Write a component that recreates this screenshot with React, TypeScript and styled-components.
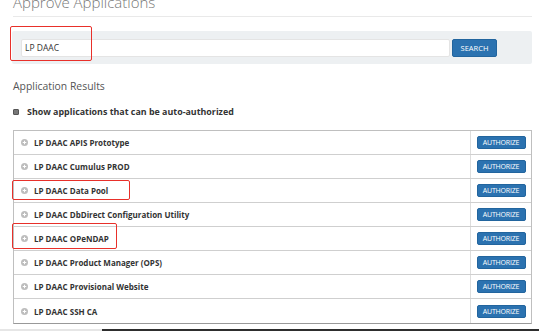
import styled, { createGlobalStyle } from 'styled-components';

const GlobalStyle = createGlobalStyle`
  html, body {
    margin: 0;
    padding: 0;
    background: #ffffff;
    overflow: hidden;
  }
  body {
    font-family: "Open Sans", "Liberation Sans", sans-serif;
    color: #333333;
  }
`

const Screen = styled.div`
  position: relative;
  width: 539px;
  height: 331px;
  display: flex;
  flex-direction: column;
  overflow: hidden;
`

const PageWrapper = styled.div`
  display: flex;
  flex-direction: column;
  padding: 0 7px 0 12px;
  flex-grow: 1;
`

const Title = styled.h1`
  margin: -8px 0 0 1px;
  padding-bottom: 4px;
  font-size: 15px;
  font-weight: 300;
  line-height: 20px;
  color: #777777;
  border-bottom: 1px solid #e9e9e9;
`

const SearchWell = styled.div`
  display: flex;
  align-items: center;
  gap: 2px;
  margin-top: 14px;
  height: 33px;
  padding: 0 9px;
  box-sizing: border-box;
  background: #edf0f2;
  border-radius: 2px;
`

const SearchInput = styled.input`
  width: 429px;
  height: 18px;
  box-sizing: border-box;
  padding: 0 3px;
  border: 1px solid #e4e4e4;
  border-radius: 2px;
  background: #ffffff;
  font-family: "Open Sans", sans-serif;
  font-size: 8.5px;
  color: #333333;
  outline: none;
`

const BlueButton = styled.button<{ $small?: boolean }>`
  display: flex;
  align-items: center;
  justify-content: center;
  width: ${p => (p.$small ? '49px' : '45px')};
  height: ${p => (p.$small ? '13px' : '18px')};
  padding: 0;
  border: 1px solid #22659e;
  border-radius: 2px;
  background: #2b72b0;
  color: #ffffff;
  font-family: "Open Sans", sans-serif;
  font-size: ${p => (p.$small ? '7px' : '7.5px')};
  letter-spacing: ${p => (p.$small ? '-0.2px' : '0')};
  text-transform: uppercase;
  cursor: pointer;
`

const SectionTitle = styled.h2`
  margin: 15px 0 0 1px;
  font-size: 10.4px;
  font-weight: 400;
  line-height: 14px;
  color: #555555;
`

const CheckRow = styled.label`
  display: flex;
  align-items: center;
  gap: 8px;
  margin: 13px 0 0 1px;
  font-size: 8.9px;
  font-weight: 700;
  line-height: 12px;
  color: #333333;
`

const CheckBox = styled.span`
  width: 4px;
  height: 4px;
  border: 0.5px solid #555555;
  background: #777777;
  border-radius: 1px;
`

const Table = styled.div`
  display: flex;
  flex-direction: column;
  margin: 12px 0 0 1px;
  border: 1px solid #bfbfbf;
  border-bottom-color: #999999;
`

const Row = styled.div`
  display: grid;
  grid-template-columns: 1fr 61px;
  height: 24px;
  box-sizing: border-box;
  border-bottom: 1px solid #cfcfcf;
  &:last-child {
    border-bottom: none;
  }
`

const NameCell = styled.div`
  display: flex;
  align-items: center;
  gap: 6px;
  padding-left: 7px;
  font-size: 8px;
  font-weight: 700;
  color: #333333;
`

const ActionCell = styled.div`
  display: flex;
  align-items: center;
  justify-content: center;
  border-left: 1px solid #dddddd;
`

const Highlight = styled.div<{ $x: number; $y: number; $w: number; $h: number }>`
  position: absolute;
  left: ${p => p.$x}px;
  top: ${p => p.$y}px;
  width: ${p => p.$w}px;
  height: ${p => p.$h}px;
  box-sizing: border-box;
  border: 1.5px solid #e8302a;
  border-radius: 2px;
  pointer-events: none;
`

const BottomBar = styled.div`
  display: flex;
  height: 2px;
`

const BarPart = styled.div<{ $dark?: boolean }>`
  width: ${p => (p.$dark ? 'auto' : '102px')};
  flex-grow: ${p => (p.$dark ? 1 : 0)};
  background: ${p => (p.$dark ? '#2e2e2e' : '#e6e6e6')};
`

const PlusIcon = () => (
  <svg width="7" height="7" viewBox="0 0 14 14">
    <circle cx="7" cy="7" r="7" fill="#bdbdbd" />
    <path d="M7 3.5v7M3.5 7h7" stroke="#ffffff" strokeWidth="2" />
  </svg>
)

const apps = [
  'LP DAAC APIS Prototype',
  'LP DAAC Cumulus PROD',
  'LP DAAC Data Pool',
  'LP DAAC DbDirect Configuration Utility',
  'LP DAAC OPeNDAP',
  'LP DAAC Product Manager (OPS)',
  'LP DAAC Provisional Website',
  'LP DAAC SSH CA',
]

const App: React.FC = () => {
  return (
    <Screen>
      <GlobalStyle />
      <PageWrapper>
        <Title>Approve Applications</Title>
        <SearchWell>
          <SearchInput defaultValue="LP DAAC" />
          <BlueButton>Search</BlueButton>
        </SearchWell>
        <SectionTitle>Application Results</SectionTitle>
        <CheckRow>
          <CheckBox />
          Show applications that can be auto-authorized
        </CheckRow>
        <Table>
          {apps.map(name => (
            <Row key={name}>
              <NameCell>
                <PlusIcon />
                {name}
              </NameCell>
              <ActionCell>
                <BlueButton $small>Authorize</BlueButton>
              </ActionCell>
            </Row>
          ))}
        </Table>
      </PageWrapper>
      <BottomBar>
        <BarPart />
        <BarPart $dark />
      </BottomBar>
      <Highlight $x={10} $y={26} $w={82} $h={35} />
      <Highlight $x={12} $y={180} $w={118} $h={20} />
      <Highlight $x={12} $y={223} $w={105} $h={26} />
    </Screen>
  );
};

export default App;
